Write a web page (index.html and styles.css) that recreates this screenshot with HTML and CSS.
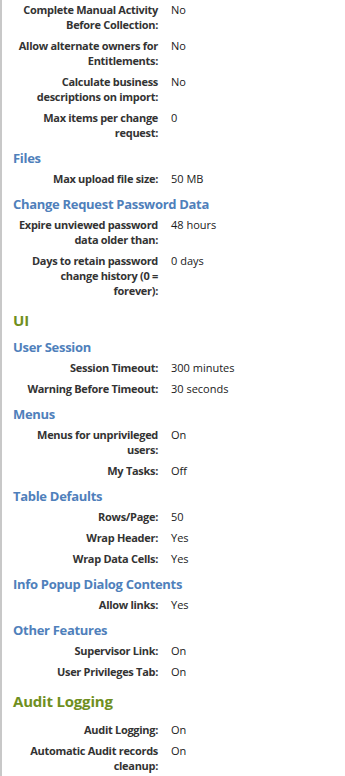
FILE: index.html
```html
<!DOCTYPE html>
<html>
<head>
    <title>System Configuration</title>
    <link rel="stylesheet" href="styles.css">
</head>
<body>
    <div class="page">
        <table class="props first">
            <tr><td class="label">Complete Manual Activity Before Collection:</td><td class="value">No</td></tr>
            <tr><td class="label">Allow alternate owners for Entitlements:</td><td class="value">No</td></tr>
            <tr><td class="label">Calculate business descriptions on import:</td><td class="value">No</td></tr>
            <tr><td class="label">Max items per change request:</td><td class="value">0</td></tr>
        </table>

        <h3>Files</h3>
        <table class="props">
            <tr><td class="label">Max upload file size:</td><td class="value">50 MB</td></tr>
        </table>

        <h3>Change Request Password Data</h3>
        <table class="props">
            <tr><td class="label">Expire unviewed password data older than:</td><td class="value">48 hours</td></tr>
            <tr><td class="label">Days to retain password change history (0 = forever):</td><td class="value">0 days</td></tr>
        </table>

        <h2>UI</h2>
        <h3>User Session</h3>
        <table class="props">
            <tr><td class="label">Session Timeout:</td><td class="value">300 minutes</td></tr>
            <tr><td class="label">Warning Before Timeout:</td><td class="value">30 seconds</td></tr>
        </table>

        <h3>Menus</h3>
        <table class="props">
            <tr><td class="label">Menus for unprivileged users:</td><td class="value">On</td></tr>
            <tr><td class="label">My Tasks:</td><td class="value">Off</td></tr>
        </table>

        <h3>Table Defaults</h3>
        <table class="props">
            <tr><td class="label">Rows/Page:</td><td class="value">50</td></tr>
            <tr><td class="label">Wrap Header:</td><td class="value">Yes</td></tr>
            <tr><td class="label">Wrap Data Cells:</td><td class="value">Yes</td></tr>
        </table>

        <h3>Info Popup Dialog Contents</h3>
        <table class="props">
            <tr><td class="label">Allow links:</td><td class="value">Yes</td></tr>
        </table>

        <h3>Other Features</h3>
        <table class="props">
            <tr><td class="label">Supervisor Link:</td><td class="value">On</td></tr>
            <tr><td class="label">User Privileges Tab:</td><td class="value">On</td></tr>
        </table>

        <h2>Audit Logging</h2>
        <table class="props">
            <tr><td class="label">Audit Logging:</td><td class="value">On</td></tr>
            <tr><td class="label">Automatic Audit records cleanup:</td><td class="value">On</td></tr>
        </table>
    </div>
</body>
</html>
```

FILE: styles.css
```css
body {
    margin: 0;
    font-family: "Open Sans", Arial, sans-serif;
    font-size: 11px;
    color: #222;
    background: #fff;
}

.page {
    border-left: 2px solid #c8c8c8;
    min-height: 776px;
    padding-left: 11px;
}

.props {
    border-collapse: collapse;
    margin-left: -1px;
}

.props.first {
    margin-top: -1px;
}

.props td {
    padding: 3px 6px;
    line-height: 15px;
    vertical-align: top;
}

.props .label {
    width: 140px;
    text-align: right;
    font-weight: bold;
    color: #333;
    letter-spacing: -0.3px;
}

.props .value {
    padding-left: 7px;
    color: #1a1a1a;
}

h2 {
    margin: 9px 0 8px;
    font-size: 15px;
    line-height: 20px;
    color: #6f8f1e;
    letter-spacing: -0.2px;
}

h3 {
    margin: 6px 0 1px;
    font-size: 13px;
    line-height: 18px;
    color: #4f80bb;
    letter-spacing: -0.3px;
}
```
